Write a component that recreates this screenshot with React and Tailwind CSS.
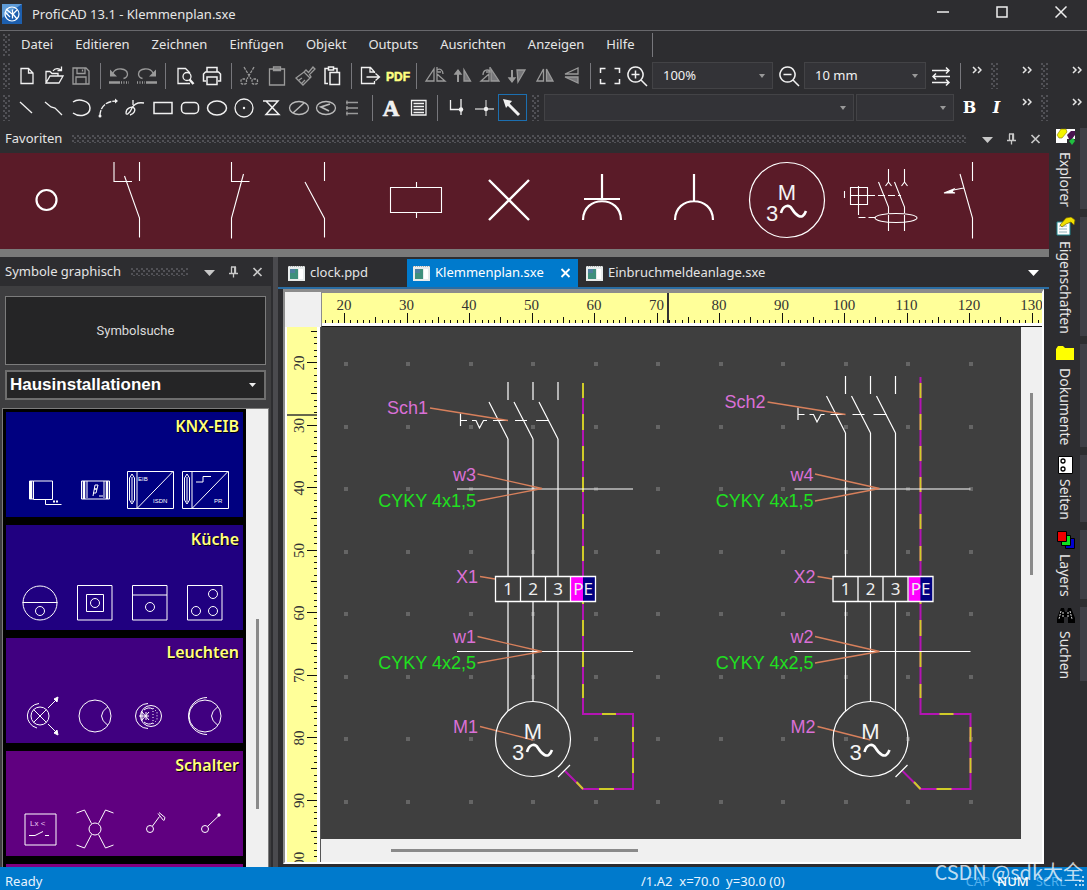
import React from "react";

const DOTS =
  "bg-[radial-gradient(circle_at_1px_1px,#515156_1px,transparent_1px),radial-gradient(circle_at_3px_3px,#515156_1px,transparent_1px)] bg-[length:5px_5px]";

function Grip() {
  return <div className={`h-[26px] w-[7px] shrink-0 ${DOTS}`} />;
}

function Sep() {
  return (
    <div className="flex h-[26px] w-[11px] shrink-0 justify-center">
      <div className="w-px bg-[#77777c]" />
    </div>
  );
}

function Tool({ label, dim, active, children }) {
  return (
    <button
      type="button"
      aria-label={label}
      className={`flex h-[27px] min-w-0 flex-1 items-center justify-center ${
        active ? "border border-[#1c6fb0]" : ""
      } ${dim ? "text-[#9a9a9a]" : "text-[#f1f1f1]"}`}
    >
      <svg width="22" height="22" viewBox="0 0 22 22" fill="none" stroke="currentColor" strokeWidth="1.3" className="shrink-0 overflow-visible">
        {children}
      </svg>
    </button>
  );
}

function More() {
  return (
    <button type="button" aria-label="Weitere Schaltflächen" className="mb-3 h-[10px] w-[10px] shrink-0 text-[#e6e6e6]">
      <svg width="10" height="8" viewBox="0 0 10 8" fill="none" stroke="currentColor" strokeWidth="1.5">
        <path d="M1 1l3 3l-3 3M6 1l3 3l-3 3" />
      </svg>
    </button>
  );
}

function Combo({ label, value, className }) {
  return (
    <div className={`grid h-[27px] min-w-0 items-center border border-[#434346] bg-[#333337] ${className}`}>
      <select
        aria-label={label}
        className="col-start-1 row-start-1 h-full w-full min-w-0 appearance-none bg-transparent pl-[10px] text-[13px] text-[#f1f1f1] outline-none"
      >
        <option>{value}</option>
      </select>
      <svg width="6" height="4" className="pointer-events-none col-start-1 row-start-1 mr-[7px] justify-self-end" fill="#999">
        <path d="M0 0h6l-3 4z" />
      </svg>
    </div>
  );
}

const FILE_TOOLS = [
  ["Neu", false, <path key="a" d="M5 3.5h7.500l4.500 4.500v10.500h-12zM12.500 3.500v4.500h4.500" />],
  ["Öffnen", false, <path key="a" d="M3 18V6.500h4l2 2h6V11M3 18l4-7h13l-4 7zM10 6c2-3 6-3 8-1M18.500 1.500v4h-4" />],
  ["Speichern", true, <path key="a" d="M3 3h13l3 3v13H3zM7 3v5.500h8V3M6 19v-7h10v7M12.500 4.500v2" />],
  null,
  ["Rückgängig", true, <g key="a"><path d="M5 8c3-6 14-5 14.500 1c0 3-2 4-4 4.500" /><path d="M2 4.500v7h7z" fill="currentColor" stroke="none" /><path d="M1 17.500h11" strokeWidth="2.500" /><path d="M13 17.500h8" strokeWidth="2.500" strokeDasharray="1 1.500" /></g>],
  ["Wiederholen", true, <g key="a"><path d="M17 8c-3-6-14-5-14.500 1c0 3 2 4 4 4.500" /><path d="M20 4.500v7h-7z" fill="currentColor" stroke="none" /><path d="M10 17.500h11" strokeWidth="2.500" /><path d="M1 17.500h8" strokeWidth="2.500" strokeDasharray="1 1.500" /></g>],
  null,
  ["Seitenansicht", false, <g key="a"><path d="M16 18.500H4V3.500h7.500l4.500 4.500" /><circle cx="13" cy="11.500" r="4" /><path d="M15.500 14.500l4 4.500" strokeWidth="2.500" /></g>],
  ["Drucken", false, <path key="a" d="M6 7V2.500h10V7M5 16H2.500V9l2-2h13l2 2v7H17M6 12h10v7.500H6z" strokeWidth="1.500" />],
  null,
  ["Ausschneiden", true, <g key="a"><path d="M5 2l7 12M15 2L8 14" strokeDasharray="3 1" /><rect x="2" y="14" width="5.500" height="5" rx="1.500" strokeDasharray="2.500 1" /><rect x="13" y="14" width="5.500" height="5" rx="1.500" strokeDasharray="2.500 1" /></g>],
  ["Kopieren", true, <path key="a" d="M3.500 4h15v16h-15zM7.500 2h7v3.500h-7z" />],
  ["Format übertragen", true, <path key="a" d="M2 13l8-6l6 6l-7 7zM5 15l3-2M8 18l3-3M10 7l2-2l2.500 2.500L19 2l2 2l-5.500 5.500L17 12l-2 2" />],
  ["Einfügen", false, <path key="a" d="M7 18.500H4v-15H7M16 7V3.500h-3M7.500 2h5v3h-5zM9 7.500h9.500v12H9z" strokeWidth="1.500" />],
  null,
  ["Exportieren", false, <path key="a" d="M15.500 8V7l-4-4.500h-9v16h13V16M11 2.500V7h4M7.500 12h12.500M16.500 8.500l4 3.500l-4 3.500" />],
  ["PDF", false, <text key="a" x="12" y="16" textAnchor="middle" fill="#ffff80" stroke="#ffff80" strokeWidth="0.500" className="font-['Liberation_Sans_Narrow','Liberation_Sans',sans-serif] text-[12px] font-bold">PDF</text>],
  null,
  ["Links drehen", true, <g key="a"><path d="M1 16h8V4z" /><path d="M12 16h8l-8-7zM12 5c3-2 6 0 6 4M12 2v5h4" /></g>],
  ["Nach oben", true, <g key="a"><path d="M6 17V5" strokeWidth="2" /><path d="M3 9l3-4l3 4z" fill="currentColor" /><path d="M12 16V5l6.500 11z" fill="#77777a" /></g>],
  ["Rechts drehen", true, <g key="a"><path d="M12 16V4l8 12z" fill="#77777a" /><path d="M2 16h8V9zM4 10c0-5 4-6 7-4M11 2v5H7" /></g>],
  ["Nach unten", true, <g key="a"><path d="M6 5v12" strokeWidth="2" /><path d="M3 13l3 4l3-4z" fill="currentColor" /><path d="M11 5h8l-7 12z" fill="#77777a" /></g>],
  ["Horizontal spiegeln", true, <g key="a"><path d="M9.500 16H3l6.500-12z" /><path d="M12.500 16V4L19 16z" fill="#77777a" /></g>],
  ["Vertikal spiegeln", true, <g key="a"><path d="M17 9V3L4 9z" /><path d="M4 12h13v6z" fill="#77777a" /></g>],
  null,
  ["Vollbild", false, <path key="a" d="M6.500 3.500h-5V8M1.500 14v4.500h5M15.500 3.500h5V8M20.500 14v4.500h-5" strokeWidth="1.500" />],
  ["Vergrößern", false, <path key="a" d="M9.500 2a7.500 7.500 0 1 0 .01 0zM5.500 9.500h8M9.500 5.500v8M15 15l6 6" strokeWidth="1.500" />],
];

const DRAW_TOOLS = [
  ["Linie", false, <path key="a" d="M4 5l12 11" />],
  ["Polylinie", false, <path key="a" d="M2 5l6 5l4 1l7 7" />],
  ["Bogen", false, <path key="a" d="M3 5c6-4 17-1 17 6s-10 10-17 5" strokeWidth="1.500" />],
  ["Bézierkurve", false, <g key="a"><path d="M3 19C3 9 10 4 19 4" strokeDasharray="6 1" /><circle cx="3" cy="19" r="1.500" fill="currentColor" stroke="none" /><path d="M18 1.500l3 2.500l-3 2.500z" fill="currentColor" stroke="none" /></g>],
  ["Kurve", false, <path key="a" d="M20 6c-6-1-10 1-12 5c-2 5-6 8-6 5c0-5 6-7 8-5s0 6-4 7M9 3v5" />],
  ["Rechteck", false, <path key="a" d="M2 5.500h18v11H2z" strokeWidth="1.500" />],
  ["Abgerundetes Rechteck", false, <rect key="a" x="2.500" y="5.500" width="17" height="11" rx="4" strokeWidth="1.500" />],
  ["Ellipse", false, <ellipse key="a" cx="11" cy="11" rx="9.500" ry="7" strokeWidth="1.500" />],
  ["Kreis", false, <g key="a"><circle cx="11" cy="11" r="9" /><circle cx="11" cy="11" r="1.200" fill="currentColor" stroke="none" /></g>],
  ["Vieleck", false, <path key="a" d="M2 4h15L5 17.500h13L5 4" strokeWidth="1.500" />],
  ["Sektor", false, <g key="a" stroke="#bbb"><ellipse cx="11" cy="11" rx="9.500" ry="6.500" /><path d="M5 16L16 6" strokeWidth="1.500" /></g>],
  ["Segment", false, <g key="a" stroke="#bbb"><ellipse cx="11" cy="11" rx="9.500" ry="6.500" /><path d="M15 7l-9 3l8 4" strokeWidth="1.800" /></g>],
  ["Verteiler", true, <path key="a" d="M4 5.500h12M4 11h12M4 16.500h12M5 3.500v4M5 9v4M5 14.500v4" />],
  null,
  ["Text", false, <text key="a" x="11" y="18.500" textAnchor="middle" fill="currentColor" stroke="currentColor" strokeWidth="0.700" className="font-['Liberation_Serif',serif] text-[23px] font-bold">A</text>],
  ["Textfeld", false, <path key="a" d="M3.500 3.500h14.500v14.500h-14.500zM5.500 6.500h10.500M5.500 9.500h10.500M5.500 12.500h10.500M5.500 15.500h10.500" />],
  null,
  ["Leitung", false, <g key="a"><path d="M4.500 3v9.500h11M15 2v16" /><circle cx="15" cy="12.500" r="2.200" fill="currentColor" stroke="none" /></g>],
  ["Verbindung", false, <g key="a"><path d="M2 12h19M13 3v16" stroke="#bbb" /><circle cx="13" cy="12" r="2.200" fill="currentColor" stroke="none" /></g>],
  ["Auswahl", false, <g key="a"><path d="M7 7l11 11" strokeWidth="3" /><path d="M2 2l9 2l-6 7z" fill="currentColor" stroke="none" /></g>, true],
];

function ToolList({ tools, className }) {
  return (
    <div className={`flex shrink-0 items-center ${className}`}>
      {tools.map((t, i) =>
        t === null ? (
          <Sep key={i} />
        ) : (
          <Tool key={i} label={t[0]} dim={t[1]} active={t[3]}>
            {t[2]}
          </Tool>
        )
      )}
    </div>
  );
}

function Motor({ x, y }) {
  return (
    <g transform={`translate(${x} ${y})`}>
      <circle r="37.500" fill="none" stroke="#fff" strokeWidth="1.200" />
      <g fill="#f4f4f4" stroke="none" className="font-['Liberation_Sans',sans-serif] text-[22px]">
        <text x="0" y="0" textAnchor="middle">M</text>
        <text x="-21" y="20.500">3</text>
      </g>
      <path d="M-6 13C-4 5 2 4 5 9S15 22 19 11" fill="none" stroke="#fff" strokeWidth="2.600" />
    </g>
  );
}

/* Each favourite is drawn around the centre of its own cell. */
const FAVORITES = [
  ["Klemme", <circle key="a" cx=".5" cy="-1" r="10" strokeWidth="2.200" />],
  ["Öffner", <path key="a" d="M-25 -39v19.500h18M.5 -39v19M-14.500 -25L.5 17v19.500" />],
  ["Öffner verzögert", <path key="a" d="M.5 -39v19.500h18M12.500 -27L.5 17v20.500" />],
  ["Schließer", <path key="a" d="M.5 -39v19M-19 -19L.5 17.500v19" />],
  ["Spule", <path key="a" d="M-25.500 -13.500h51v25h-51zM.5 -19v5.500M.5 11.500v5.500" />],
  ["Leuchte", <path key="a" d="M-20 -21L20 19M20 -21L-20 19" strokeWidth="2.400" />],
  ["Steckdose mit Schutzkontakt", <path key="a" d="M0 -27V-1M-18 -2H18M-19 19C-19 -6 19 -6 19 19" strokeWidth="2.200" />],
  ["Steckdose", <path key="a" d="M0 -27V0M-19 19C-19 -6 19 -6 19 19" strokeWidth="2.200" />],
  ["Motor", <Motor key="a" x={0} y={-1} />],
  ["FI-Schutzschalter", <g key="a"><path d="M-28.500 -13.500h17v17h-17zM-20.500 -15V14M-28.500 -5.500h17M-34.500 -10v7" /><path d="M-11 -5.500H22M-20.500 16.500h18" strokeDasharray="7 3" /><ellipse cx="17" cy="17" rx="21" ry="4.500" /><path d="M9.500 -32v13l-3 4M9.500 -19l3 4M25.500 -32v13l-3 4M25.500 -19l3 4M-.5 -19L9.500 6v6M15.500 -19L25.500 6v6M9.500 14v16M25.500 14v16" /></g>],
  ["Motorschutzschalter", <g key="a"><path d="M.5 -39v19M-12 -27L.5 17v20.500M-8.500 -13l-10 2" /><path d="M-28 -8l10 -4l-2 3l3 1z" fill="#fff" /></g>],
];

function Favorites() {
  return (
    <section>
      <PanelHeader title="Favoriten" className="h-[29px] pr-2" />
      <div className="h-24 overflow-hidden bg-[#5a1b28]">
        <div className="grid w-[1018px] grid-cols-11">
          {FAVORITES.map(([label, art]) => (
            <button key={label} type="button" aria-label={label} className="flex h-24 justify-center">
              <svg width="92" height="96" viewBox="-46 -48 92 96" fill="none" stroke="#fff" strokeWidth="1.100" className="shrink-0">
                {art}
              </svg>
            </button>
          ))}
        </div>
      </div>
      <div className="h-2 bg-[#7a7a7a]" />
    </section>
  );
}

function PanelHeader({ title, className }) {
  return (
    <div className={`flex shrink-0 items-center bg-[#2d2d30] pl-[5px] ${className}`}>
      <h2 className="text-[13px] text-[#e4e4e4]">{title}</h2>
      <div className={`mr-2 ml-[10px] h-[8px] flex-1 ${DOTS}`} />
      <div className="flex items-center gap-[13px] text-[#c8c8c8]">
        <button type="button" aria-label="Menü" className="ml-2">
          <svg width="11" height="12" fill="currentColor"><path d="M0 4h11l-5.500 6z" /></svg>
        </button>
        <button type="button" aria-label="Anheften">
          <svg width="11" height="12" fill="none" stroke="currentColor" strokeWidth="1.300"><path d="M3 1h5M3.500 1v6M7.500 1v6M6.700 1v6M1 7.500h9M5.500 7.500v4" /></svg>
        </button>
        <button type="button" aria-label="Schließen">
          <svg width="11" height="12" fill="none" stroke="currentColor" strokeWidth="1.700"><path d="M1.500 2l8 8M9.500 2l-8 8" /></svg>
        </button>
      </div>
    </div>
  );
}

const tiny = "font-['Liberation_Sans',sans-serif] text-[6px]";

const LIBRARY = [
  ["KNX-EIB", "bg-[#000080]", [
    <g key="1"><path d="M-6.500 -9h19v18.500h-19zM5.500 10v4.500h16M-10.500 -9h4v18h-4z" /><path d="M-9 -9v18" strokeWidth="2.500" /><path d="M13 11.500h6" strokeWidth="2" strokeDasharray="2 1" /></g>,
    <g key="2"><path d="M-13.500 -9h28v18h-28zM-8 -9V8M9 -9V8" /><path d="M-11 -9V9M12 -9V9" strokeWidth="2.500" /><path d="M-2 6l2 -11h3l-1 4h-3h3l-1 4h-3M4 6h4" /></g>,
    <g key="3"><path d="M-22.500 -18.500h46v37h-46zM-13 -18.500v37L23 -18.500M-18 -13v25M-20.500 -12l2.500 -4l2.500 4v22l-2.500 4l-2.500 -4z" /><text x="-12" y="-9" fill="#fff" stroke="none" className={tiny}>EIB</text><text x="3" y="13" fill="#fff" stroke="none" className={tiny}>ISDN</text></g>,
    <g key="4"><path d="M-22.500 -18.500h46v37h-46zM-13 -18.500v37L23 -18.500M-18 -13v25M-20.500 -12l2.500 -4l2.500 4v22l-2.500 4l-2.500 -4zM-9 -8h7v-5.500h8" /><text x="9" y="13" fill="#fff" stroke="none" className={tiny}>PR</text></g>,
  ]],
  ["Küche", "bg-[#200080]", [
    <g key="1"><circle r="17" /><path d="M-17.500 -.5h35" /><circle cy="8" r="4.500" /></g>,
    <g key="2"><path d="M-17.500 -17.500h34.500v34.500h-34.500zM-8.500 -8.500h17v17h-17z" /><circle r="4.500" /></g>,
    <g key="3"><path d="M-17.500 -17.500h34.500v34.500h-34.500zM-17.500 -8h34.500" /><circle cy="4" r="4.500" /></g>,
    <g key="4"><path d="M-17.500 -17.500h34.500v34.500h-34.500z" /><circle cx="8" cy="-9" r="4.500" /><circle cx="-9" cy="8" r="4.500" /><circle cx="8" cy="8" r="4.500" /></g>,
  ]],
  ["Leuchten", "bg-[#400080]", [
    <g key="1"><circle r="9" /><path d="M-6.500 -6.500l13 13M6.500 -6.500l-13 13M-1 -12.500a13 12.500 0 0 0 -2 24.500M8 -8l8 -8M8 8l8 8" /><path d="M18 -19l-1 5l-3 -3zM18 19l-1 -5l-3 3z" fill="#fff" /></g>,
    <g key="2"><circle r="16" /><path d="M13 -9.500q-13 9.500 0 19" /></g>,
    <g key="3"><circle cx="1" r="10.500" /><path d="M-2 -12.500a12.500 12.500 0 0 0 0 25M-11 0h10M-8 -5v10M-4 -4v8M-8 -4l7 8M-8 4l7 -8" /><path d="M3 -8l4 4v8l-4 4M3 -5v10" strokeDasharray="1 2" /><path d="M-6 -6a8 8 0 0 1 9 -1M-6 6a8 8 0 0 0 9 1" /></g>,
    <g key="4"><circle r="16" /><path d="M2 -18.500a18.500 18.500 0 1 0 0 37M13 -9.500q-13 9.500 0 19" /></g>,
  ]],
  ["Schalter", "bg-[#600080]", [
    <g key="1"><path d="M-15 -15h31v31h-31zM-11 6.500h6l8 -4M5 6.500h4" /><text x="-10" y="-3" fill="#e8c8f0" stroke="none" className="font-['Liberation_Sans',sans-serif] text-[8px]">Lx &lt;</text></g>,
    <g key="2"><circle r="6" /><path d="M-3.500 -5.500l-7 -13.500l-8 3M3.500 -5.500l7 -13.500l8 3M-3.500 5.500l-7 13.500l-8 -3M3.500 5.500l7 13.500l8 -3" /></g>,
    <g key="3"><circle r="3.500" /><path d="M2.500 -3l7 -9.500M8 -15.500l5.500 7M9 -16.500l6 5l-1 3" /></g>,
    <g key="4"><circle r="3.500" /><path d="M2.500 -2.500l11.500 -11" /><circle cx="14" cy="-14" r="1.200" fill="#fff" /></g>,
  ]],
  ["", "bg-[#800080]", []],
];

function SymbolPanel() {
  return (
    <aside className="flex w-[271px] shrink-0 flex-col bg-[#3e3e40]">
      <PanelHeader title="Symbole graphisch" className="h-[29px] pr-2" />
      <button type="button" className="mx-[5px] mt-[10px] h-[69px] shrink-0 border border-[#7c7c7c] bg-[#252526] font-['Roboto',sans-serif] text-[13px] text-[#dcdcdc]">
        Symbolsuche
      </button>
      <div className="mx-[5px] mt-[5px] grid h-[30px] shrink-0 items-center border-2 border-[#6e6e6e] bg-[#252526]">
        <select aria-label="Symbolbibliothek" className="col-start-1 row-start-1 h-full w-full appearance-none bg-transparent pl-[3px] font-['Liberation_Sans',sans-serif] text-[17px] font-bold text-white outline-none">
          <option>Hausinstallationen</option>
        </select>
        <svg width="7" height="4" fill="#eee" className="pointer-events-none col-start-1 row-start-1 mr-[8px] justify-self-end"><path d="M0 0h7l-3.500 4z" /></svg>
      </div>
      <div className="mx-[2px] mt-2 flex min-h-0 flex-1 border-x border-t border-[#7c7c7c]">
        <div className="flex min-h-0 flex-1 flex-col gap-2 overflow-hidden bg-black px-[3px] pt-[3px]">
          {LIBRARY.map(([name, tone, items]) => (
            <section key={tone} className={`flex h-[105px] shrink-0 flex-col justify-between overflow-hidden ${tone}`}>
              {name && (
                <h3 className="px-[4px] pt-[2px] text-right text-[16px] leading-6 font-semibold text-[#ffff80] [text-shadow:1px_1px_0_#000]">{name}</h3>
              )}
              <div className="ml-[6px] grid w-[220px] grid-cols-4">
                {items.map((art, i) => (
                  <button key={i} type="button" aria-label={`${name} ${i + 1}`}>
                    <svg width="55" height="52" viewBox="-28 -25 55 52" fill="none" stroke="#fff" strokeWidth="1">{art}</svg>
                  </button>
                ))}
              </div>
            </section>
          ))}
        </div>
        <div className="flex w-[22px] shrink-0 justify-center bg-[#f0f0f0]">
          <div className="mt-[210px] h-[190px] w-[3px] bg-[#8a8a8a]" />
        </div>
      </div>
    </aside>
  );
}

function DocIcon() {
  return (
    <svg width="17" height="15" viewBox="0 0 17 15" className="shrink-0">
      <path d="M0 0h17v15H0z" fill="#e8ecec" />
      <path d="M0 .5h17" stroke="#aaa" strokeDasharray="1 1" />
      <path d="M2 3h8v10H2z" fill="#3f8f7c" />
      <path d="M2 3h5v4H2z" fill="#4f7f9f" />
      <path d="M11 3h4v10h-4z" fill="#fff" />
    </svg>
  );
}

function Tabs() {
  return (
    <div className="flex h-[32px] shrink-0 items-end border-b-2 border-[#2a6da3] pr-[10px] text-[13px] text-[#e4e4e4]">
      <button type="button" className="flex h-[28px] w-[129px] items-center gap-[5px] pl-[10px]"><DocIcon />clock.ppd</button>
      <div className="flex h-[28px] w-[171px] items-center bg-[#007acc] pl-[6px] text-white">
        <button type="button" className="flex flex-1 items-center gap-[5px]"><DocIcon />Klemmenplan.sxe</button>
        <button type="button" aria-label="Tab schließen" className="mr-[7px]">
          <svg width="11" height="12" fill="none" stroke="#fff" strokeWidth="1.800"><path d="M1.500 2l8 8M9.500 2l-8 8" /></svg>
        </button>
      </div>
      <button type="button" className="flex h-[28px] items-center gap-[5px] pl-[8px]"><DocIcon />Einbruchmeldeanlage.sxe</button>
      <button type="button" aria-label="Alle Dokumente" className="ml-auto flex h-[28px] items-center">
        <svg width="11" height="6" fill="#fff"><path d="M0 0h11l-5.500 6z" /></svg>
      </button>
    </div>
  );
}

const UNIT = 6.25;
const range = (a, b) => Array.from({ length: b - a + 1 }, (_, i) => a + i);
const rulerText = "font-['Liberation_Serif',serif] text-[15px]";

function HorizontalRuler() {
  return (
    <svg width="100%" height="30" className="block bg-[#ffff99]">
      {range(17, 160).map((v) => {
        const x = Math.round((v - 20) * UNIT + 22) + 0.5;
        const len = v % 10 === 0 ? 10 : v % 5 === 0 ? 6 : 3;
        return <path key={v} d={`M${x} ${30 - len}V30`} stroke="#111" />;
      })}
      {range(2, 13).map((n) => (
        <text key={n} x={(n * 10 - 20) * UNIT + 22} y="17" textAnchor="middle" fill="#333" className={rulerText}>{n * 10}</text>
      ))}
      <path d="M346 0V30" stroke="#333" strokeWidth="2" />
    </svg>
  );
}

function VerticalRuler() {
  return (
    <svg width="30" height="100%" className="block bg-[#ffff99]">
      {range(15, 140).map((v) => {
        const y = Math.round((v - 20) * UNIT + 35) + 0.5;
        const len = v % 10 === 0 ? 10 : v % 5 === 0 ? 6 : 3;
        return <path key={v} d={`M${30 - len} ${y}H30`} stroke="#111" />;
      })}
      {range(2, 10).map((n) => (
        <text key={n} transform={`translate(17 ${(n * 10 - 20) * UNIT + 36}) rotate(-90)`} textAnchor="middle" fill="#333" className={rulerText}>{n * 10}</text>
      ))}
      <path d="M0 88H30" stroke="#333" strokeWidth="1.500" />
    </svg>
  );
}

const EARTH_MARKS = [[383, 398], [414, 430], [446, 461], [477, 492], [514, 529], [546, 561], [602, 604], [620, 636], [651, 667], [684, 698]];

function Circuit({ dx, lift, names }) {
  const [sw, upper, block, lower, motor] = names;
  return (
    <g transform={`translate(${dx} 0)`} fill="none">
      <g stroke="#b414b4" strokeWidth="2">
        <path d={`M583 ${383 + lift}V714H633V789H583L565 771`} />
        <path d={`${EARTH_MARKS.map(([a, b]) => `M583 ${a}V${b}`).join("")}M602 714H616M633 727V742M633 758V773M599 789H614M583 789L576.500 782`} stroke="#d0cc28" />
      </g>
      <g stroke="#fff" strokeWidth="1.200">
        <g transform={`translate(0 ${lift})`}>
          <path d="M508 382V400M533 382V400M558 382V400M489 402L508 439M514 402L533 439M539 402L558 439" />
          <path d="M460.500 413.500V426M461 420.500H467M472 420.500H476L479.500 428L483.500 420.500H487M493 420.500H507M515 420.500H527M536 420.500H549" />
        </g>
        <path d={`M508 ${439 + lift}V576M533 ${439 + lift}V576M558 ${439 + lift}V576M508 602V711M533 602V701M558 602V711`} />
        <path d="M457 489H633" />
        <path d="M457 651.500H633M558 777L570 765" />
      </g>
      <g stroke="#d8805c" strokeWidth="1.300">
        <path d={`M430 ${408 + lift}L508 ${420.5 + lift}`} />
        <path d="M477.500 474L542 488.500L477.500 501M480 576.500L495 579M477.500 636.500L542 651.500L477.500 663M480 726.500L533 740" />
      </g>
      <path d="M495.500 576.500h75v25h-75z" fill="#3f3f3f" />
      <path d="M571 577h12v24h-12z" fill="#f0f" />
      <path d="M583 577h12v24h-12z" fill="#000080" />
      <path d="M495.500 576.500h100v25h-100zM520.500 576.500v25M545.500 576.500v25M570.500 576.500v25" stroke="#fff" strokeWidth="1.300" />
      <g fill="#eee" textAnchor="middle" className="font-['Noto_Sans',sans-serif] text-[17px]">
        <text x="508" y="595">1</text>
        <text x="533" y="595">2</text>
        <text x="558" y="595">3</text>
        <text x="583" y="595">PE</text>
      </g>
      <Motor x={533} y={739} />
      <g fill="#da70d6" textAnchor="end" className="font-['Liberation_Sans',sans-serif] text-[18px]">
        <text x="428" y={414 + lift}>{sw}</text>
        <text x="476" y="481">{upper[0]}</text>
        <text x="478" y="583">{block}</text>
        <text x="476" y="643">{lower[0]}</text>
        <text x="478" y="733">{motor}</text>
        <g fill="#20e020">
          <text x="476" y="507">{upper[1]}</text>
          <text x="476" y="669">{lower[1]}</text>
        </g>
      </g>
    </g>
  );
}

function Sheet() {
  return (
    <svg width="100%" height="100%" className="block min-w-0 flex-1 bg-[#3f3f3f]">
      <g transform="translate(-321 -327)">
        {range(2, 12).map((c) =>
          range(2, 9).map((r) => (
            <rect key={`${c}-${r}`} x={Math.round(218.500 + c * 62.5)} y={Math.round(237 + r * 62.5)} width="4" height="4" fill="#656565" />
          ))
        )}
        <Circuit dx={0} lift={0} names={["Sch1", ["w3", "CYKY 4x1,5"], "X1", ["w1", "CYKY 4x2,5"], "M1"]} />
        <Circuit dx={337.5} lift={-6} names={["Sch2", ["w4", "CYKY 4x1,5"], "X2", ["w2", "CYKY 4x2,5"], "M2"]} />
      </g>
    </svg>
  );
}

function Documents() {
  return (
    <main className="flex min-w-0 flex-1 flex-col">
      <Tabs />
      <div className="mr-[5px] mb-[3px] ml-[5px] flex min-h-0 flex-1 flex-col border-t-[3px] border-r-2 border-b-2 border-l-2 border-t-[#8c8c8c] border-r-white border-b-white border-l-[#8c8c8c] bg-[#f0f0f0]">
        <div className="flex h-[35px] shrink-0">
          <div className="w-[36px] shrink-0" />
          <div className="min-w-0 flex-1 overflow-hidden border-t border-b border-l border-[#8c8c8c] border-b-[#111] bg-white">
            <HorizontalRuler />
          </div>
        </div>
        <div className="flex min-h-0 flex-1">
          <div className="w-[36px] shrink-0 overflow-hidden border-r border-[#555] bg-white pl-[2px]">
            <VerticalRuler />
          </div>
          <div className="flex min-w-0 flex-1 flex-col">
            <div className="flex min-h-0 flex-1">
              <Sheet />
              <div className="flex w-[21px] shrink-0 justify-center">
                <div className="mt-[66px] h-[182px] w-[3px] bg-[#8a8a8a]" />
              </div>
            </div>
            <div className="flex h-[23px] shrink-0 items-center pl-[70px]">
              <div className="h-[3px] w-[247px] bg-[#8a8a8a]" />
            </div>
          </div>
        </div>
      </div>
    </main>
  );
}

const DOCK = [
  ["Explorer", <g key="a"><path d="M0 1h19v10h-8v4H0z" fill="#fff" /><path d="M1 7l4 -6h5l1 3l-5 6h-3z" fill="#f4f400" stroke="#887700" strokeWidth="0.600" /><path d="M11 7l4 -4h4v4l-3 4h-3z" fill="#4a1450" /><path d="M13 13l4 -3l2 3l-3 4z" fill="#20c040" /></g>],
  ["Eigenschaften", <g key="a"><path d="M1 5h13v13H1z" fill="#fff" stroke="#208890" /><path d="M3 9h8M3 12h8M3 15h8" stroke="#8fb0b8" /><path d="M4 8l6 -7l5 -1l4 3l-1 5l-3 -3l-5 2l-4 3z" fill="#f0e000" stroke="#776600" strokeWidth="0.700" /></g>],
  ["Dokumente", <path key="a" d="M0 5l2 -3h5l2 2h9v12H0z" fill="#ff0" />],
  ["Seiten", <g key="a"><path d="M2.500 1.500h14v17h-14z" fill="#fff" stroke="#000" /><circle cx="7" cy="6" r="2" fill="none" stroke="#000" strokeWidth="1.300" /><circle cx="7" cy="14" r="2" fill="none" stroke="#000" strokeWidth="1.300" /></g>],
  ["Layers", <g key="a" stroke="#000"><path d="M9.500 8.500h9v10h-9z" fill="#0000d0" /><path d="M5.500 5.500h9v10h-9z" fill="#10e020" /><path d="M1.500 1.500h9v10h-9z" fill="#f00000" /></g>],
  ["Suchen", <g key="a"><path d="M5 1h3l1 4h2l1 -4h3l4 10v5h-7v-6H8v6H1v-5z" fill="#000" /><path d="M5 4l-2 8M7 5v6M14 4l2 8M12 5v6" stroke="#ddd" strokeDasharray="2 1" /></g>],
];

function Dock() {
  return (
    <nav className="flex w-[38px] shrink-0 flex-col gap-2 bg-[#2d2d30] pt-[4px]">
      {DOCK.map(([name, art]) => (
        <button key={name} type="button" className="flex flex-col items-start border-r-[7px] border-[#3f3f46] pb-[2px] pl-[7px] text-[14px] text-[#e4e4e4]">
          <svg width="20" height="20" viewBox="0 0 20 20" className="mb-[4px]">{art}</svg>
          <span className="leading-[18px] [writing-mode:vertical-rl]">{name}</span>
        </button>
      ))}
    </nav>
  );
}

function TitleBar() {
  return (
    <header className="flex h-[31px] shrink-0 items-center border-b border-[#68686c] pr-5 pl-[2px]">
      <svg width="20" height="20" viewBox="0 0 20 20" fill="none" className="mr-[10px] mb-[3px]">
        <path d="M0 0h20v20H0z" fill="#1d5fae" />
        <path d="M0 0h20L0 14z" fill="#5f9bd6" />
        <circle cx="10" cy="10" r="7" stroke="#fff" strokeWidth="1.200" />
        <path d="M4 5l6 5M10.500 5.500v9M15 6l-4 4l4 5M3 8l5 5" stroke="#fff" strokeWidth="1.300" />
      </svg>
      <h1 className="flex-1 text-[13px] text-[#e6e6e6]">ProfiCAD 13.1 - Klemmenplan.sxe</h1>
      <div className="mb-[7px] flex gap-[47px]">
        <button type="button" aria-label="Minimieren"><svg width="12" height="12" stroke="#eee" strokeWidth="1.500"><path d="M0 6h12" /></svg></button>
        <button type="button" aria-label="Maximieren"><svg width="12" height="12" fill="none" stroke="#eee" strokeWidth="1.500"><path d="M1 1h10v10H1z" /></svg></button>
        <button type="button" aria-label="Beenden"><svg width="12" height="12" stroke="#eee" strokeWidth="1.500"><path d="M.5.5l11 11M11.500.5l-11 11" /></svg></button>
      </div>
    </header>
  );
}

const MENUS = ["Datei", "Editieren", "Zeichnen", "Einfügen", "Objekt", "Outputs", "Ausrichten", "Anzeigen", "Hilfe"];

export default function App() {
  return (
    <div className="relative flex h-screen flex-col overflow-hidden bg-[#2d2d30] font-['Noto_Sans',sans-serif] text-[13px] text-[#e6e6e6]">
      <TitleBar />
      <nav className="flex h-[29px] shrink-0 items-center pb-px pl-[3px]">
        <div className={`h-[22px] w-[7px] ${DOTS}`} />
        <div className="flex">
          {MENUS.map((m) => (
            <button key={m} type="button" className="px-[11px]">{m}</button>
          ))}
        </div>
        <div className="ml-[6px] h-[24px] w-px bg-[#77777c]" />
      </nav>
      <div className="flex h-[31px] shrink-0 items-center pr-[5px] pl-[3px]">
        <Grip />
        <ToolList tools={FILE_TOOLS} className="ml-[3px] w-[638px]" />
        <Combo label="Zoom" value="100%" className="ml-px w-[121px]" />
        <div className="flex w-[31px]">
          <Tool label="Verkleinern"><path d="M9.500 2a7.500 7.500 0 1 0 .01 0zM5.500 9.500h8M15 15l6 6" strokeWidth="1.500" /></Tool>
        </div>
        <Combo label="Raster" value="10 mm" className="w-[122px]" />
        <div className="flex w-[29px]">
          <Tool label="Seiten tauschen"><path d="M2 5.500h17M16 2.500l3 3l-3 3M20 11.500H3M6 8.500l-3 3l3 3M2 17.500h17M16 14.500l3 3l-3 3" strokeWidth="1.500" /></Tool>
        </div>
        <Sep />
        <div className="ml-auto flex items-center">
          <More /><div className="mr-[24px] ml-[9px]"><Grip /></div>
          <More /><div className="mr-[24px] ml-[9px]"><Grip /></div>
          <More />
        </div>
      </div>
      <div className="flex h-[33px] shrink-0 items-center pr-[5px] pl-[3px]">
        <Grip />
        <ToolList tools={DRAW_TOOLS} className="ml-[3px] w-[514px]" />
        <div className="mx-[5px]"><Grip /></div>
        <Combo label="Schriftart" value="" className="flex-1" />
        <Combo label="Schriftgröße" value="" className="ml-[2px] w-[98px]" />
        <button type="button" aria-label="Fett" className="ml-[2px] w-[27px] font-['DejaVu_Serif',serif] text-[16px] leading-5 font-bold text-white">B</button>
        <button type="button" aria-label="Kursiv" className="mr-[12px] w-[27px] font-['DejaVu_Serif',serif] text-[16px] leading-5 font-bold text-white italic">I</button>
        <More /><div className="mr-[24px] ml-[9px]"><Grip /></div>
        <More />
      </div>
      <div className="flex min-h-0 flex-1">
        <div className="flex min-w-0 flex-1 flex-col">
          <Favorites />
          <div className="flex min-h-0 flex-1">
            <SymbolPanel />
            <div className="ml-[2px] w-[5px] shrink-0 bg-[#4a4a4e]" />
            <Documents />
          </div>
        </div>
        <Dock />
      </div>
      <footer className="flex h-[23px] shrink-0 items-center bg-[#007acc] pt-[5px] pr-[3px] pl-[5px] text-[13px] leading-[18px] text-[#e8f4ff]">
        <span className="w-[636px]">Ready</span>
        <span className="whitespace-pre">{"/1.A2  x=70.0  y=30.0 (0)"}</span>
        <span className="mr-[7px] ml-auto text-[#52b0ee]">CAP</span>
        <span className="font-medium text-white">NUM</span>
        <span className="mr-[8px] ml-[7px] text-[#52b0ee]">SCRL</span>
        <svg width="10" height="12" fill="#a8d4f4"><path d="M8 1h2v2h-2zM5 5h2v2h-2zM8 5h2v2h-2zM1 9h2v2h-2zM5 9h2v2h-2zM8 9h2v2h-2z" /></svg>
      </footer>
      <div className="pointer-events-none absolute right-[4px] bottom-[4px] font-['Noto_Sans_CJK_SC',sans-serif] text-[20px] leading-7 text-white/75">CSDN @sdk大全</div>
    </div>
  );
}
